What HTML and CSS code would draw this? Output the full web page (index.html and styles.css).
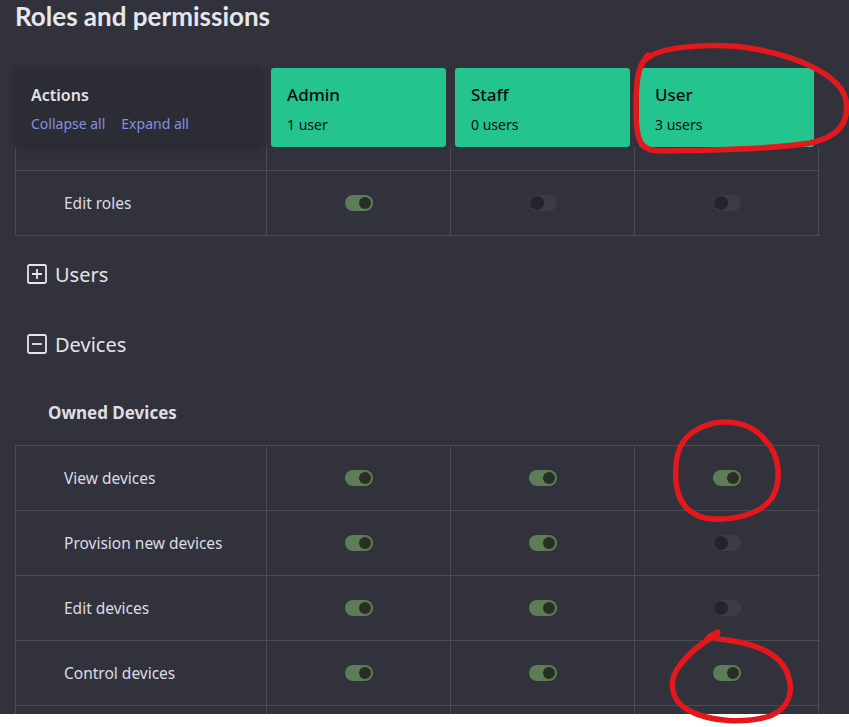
FILE: index.html
```html
<!DOCTYPE html>
<html lang="en">
<head>
  <meta charset="UTF-8">
  <title>Roles and permissions</title>
  <link rel="stylesheet" href="styles.css">
</head>
<body>

  <div class="page">
    <h1 class="title">Roles and permissions</h1>

    <div class="header-row">
      <div class="actions-card">
        <h3>Actions</h3>
        <div class="links">
          <a href="#">Collapse all</a>
          <a href="#">Expand all</a>
        </div>
      </div>
      <div class="role-card">
        <h3>Admin</h3>
        <p>1 user</p>
      </div>
      <div class="role-card">
        <h3>Staff</h3>
        <p>0 users</p>
      </div>
      <div class="role-card">
        <h3>User</h3>
        <p>3 users</p>
      </div>
    </div>

    <div class="table">
      <div class="row spacer">
        <div class="cell"></div><div class="cell"></div><div class="cell"></div><div class="cell"></div>
      </div>
      <div class="row">
        <div class="cell label">Edit roles</div>
        <div class="cell"><span class="toggle on"></span></div>
        <div class="cell"><span class="toggle"></span></div>
        <div class="cell"><span class="toggle"></span></div>
      </div>
    </div>

    <div class="section">
      <svg class="box-icon" width="20" height="20" viewBox="0 0 20 20">
        <rect x="1" y="1" width="18" height="18" rx="1.5" fill="none" stroke="currentColor" stroke-width="1.8"/>
        <path d="M10 5v10M5 10h10" stroke="currentColor" stroke-width="1.8"/>
      </svg>
      <span>Users</span>
    </div>

    <div class="section">
      <svg class="box-icon" width="20" height="20" viewBox="0 0 20 20">
        <rect x="1" y="1" width="18" height="18" rx="1.5" fill="none" stroke="currentColor" stroke-width="1.8"/>
        <path d="M5 10h10" stroke="currentColor" stroke-width="1.8"/>
      </svg>
      <span>Devices</span>
    </div>

    <div class="subsection">Owned Devices</div>

    <div class="table top">
      <div class="row">
        <div class="cell label">View devices</div>
        <div class="cell"><span class="toggle on"></span></div>
        <div class="cell"><span class="toggle on"></span></div>
        <div class="cell"><span class="toggle on"></span></div>
      </div>
      <div class="row">
        <div class="cell label">Provision new devices</div>
        <div class="cell"><span class="toggle on"></span></div>
        <div class="cell"><span class="toggle on"></span></div>
        <div class="cell"><span class="toggle"></span></div>
      </div>
      <div class="row">
        <div class="cell label">Edit devices</div>
        <div class="cell"><span class="toggle on"></span></div>
        <div class="cell"><span class="toggle on"></span></div>
        <div class="cell"><span class="toggle"></span></div>
      </div>
      <div class="row">
        <div class="cell label">Control devices</div>
        <div class="cell"><span class="toggle on"></span></div>
        <div class="cell"><span class="toggle on"></span></div>
        <div class="cell"><span class="toggle on"></span></div>
      </div>
      <div class="row">
        <div class="cell"></div><div class="cell"></div><div class="cell"></div><div class="cell"></div>
      </div>
    </div>
  </div>

  <!-- hand-drawn markers from the screenshot -->
  <svg class="marks" width="849" height="727" viewBox="0 0 849 727">
    <path d="M645 60 C660 45 720 42 760 50 C800 58 840 75 846 100 C850 125 835 138 810 143 C770 150 700 150 660 151 C640 151 636 140 636 110 C636 80 638 65 648 55"/>
    <path d="M700 428 C720 418 750 420 765 440 C780 455 782 480 772 498 C760 515 730 522 705 518 C680 512 674 490 676 465 C677 445 688 432 705 426"/>
    <path d="M706 641 C708 637 712 634 718 632 C716 636 716 638 718 639 C742 641 775 648 786 670 C795 690 790 708 770 716 C745 724 710 722 688 710 C670 700 668 680 680 665 C690 652 700 644 714 636"/>
  </svg>

</body>
</html>
```

FILE: styles.css
```css
body {
  margin: 0;
  background: #ffffff;
  font-family: 'Noto Sans', sans-serif;
  color: #e2e2e8;
}

.page {
  height: 714px;
  overflow: hidden;
  background: #32323c;
  padding-left: 15px;
}

.title {
  margin: 0;
  height: 32px;
  line-height: 32px;
  font-family: 'Lato', sans-serif;
  font-size: 26px;
  font-weight: 700;
  color: #e6e6ec;
}

.header-row {
  display: grid;
  grid-template-columns: 251px 184px 184px 184px;
  margin-top: 36px;
  height: 79px;
}

.actions-card, .role-card {
  padding: 2px 16px 0;
  display: flex;
  flex-direction: column;
  justify-content: center;
}

.actions-card {
  background: #2c2c35;
  margin-right: 4px;
  box-shadow: 0 2px 8px rgba(0,0,0,0.2);
}

.role-card {
  background: #23c48e;
  margin: 0 4px 0 5px;
  padding-top: 3px;
  border-radius: 3px;
  color: #0c0c0c;
}

.actions-card h3, .role-card h3 {
  margin: 0;
  font-size: 16px;
  font-weight: 600;
  line-height: 20px;
}

.role-card h3 {
  font-weight: 500;
  font-size: 17px;
}

.links {
  margin-top: 9px;
  display: flex;
  gap: 16px;
}

.links a {
  color: #7f92e2;
  text-decoration: none;
  font-size: 14px;
}

.role-card p {
  margin: 10px 0 0;
  font-size: 14px;
}

.table {
  width: 804px;
  border-left: 1px solid #4b4b56;
}

.table.top {
  border-top: 1px solid #4b4b56;
}

.row {
  display: grid;
  grid-template-columns: 251px 184px 184px 184px;
  height: 65px;
  border-bottom: 1px solid #4b4b56;
  box-sizing: border-box;
}

.row.spacer {
  height: 24px;
}

.cell {
  border-right: 1px solid #4b4b56;
  display: flex;
  align-items: center;
  justify-content: center;
}

.cell.label {
  justify-content: flex-start;
  padding-left: 48px;
  font-size: 15.5px;
  color: #dcdce2;
}

.toggle {
  width: 28px;
  height: 16px;
  border-radius: 8px;
  background: #3c3c47;
  position: relative;
}

.toggle::after {
  content: '';
  position: absolute;
  top: 1px;
  left: 1px;
  width: 14px;
  height: 14px;
  border-radius: 50%;
  background: #24242d;
}

.toggle.on {
  background: #5f7c58;
}

.toggle.on::after {
  left: auto;
  right: 2px;
  top: 2px;
  width: 12px;
  height: 12px;
  background: #263022;
}

.section {
  height: 70px;
  display: flex;
  align-items: center;
  gap: 8px;
  padding-left: 12px;
  font-size: 20px;
  color: #e4e4ea;
}

.table + .section {
  margin-top: 3px;
}

.box-icon {
  color: #e4e4ea;
}

.subsection {
  height: 66px;
  display: flex;
  align-items: center;
  padding-left: 33px;
  font-size: 17px;
  font-weight: 700;
  color: #dedee4;
}

.marks {
  position: absolute;
  top: 0;
  left: 0;
  pointer-events: none;
}

.marks path {
  fill: none;
  stroke: #e3181c;
  stroke-width: 5.5;
  stroke-linecap: round;
  stroke-linejoin: round;
}
```
